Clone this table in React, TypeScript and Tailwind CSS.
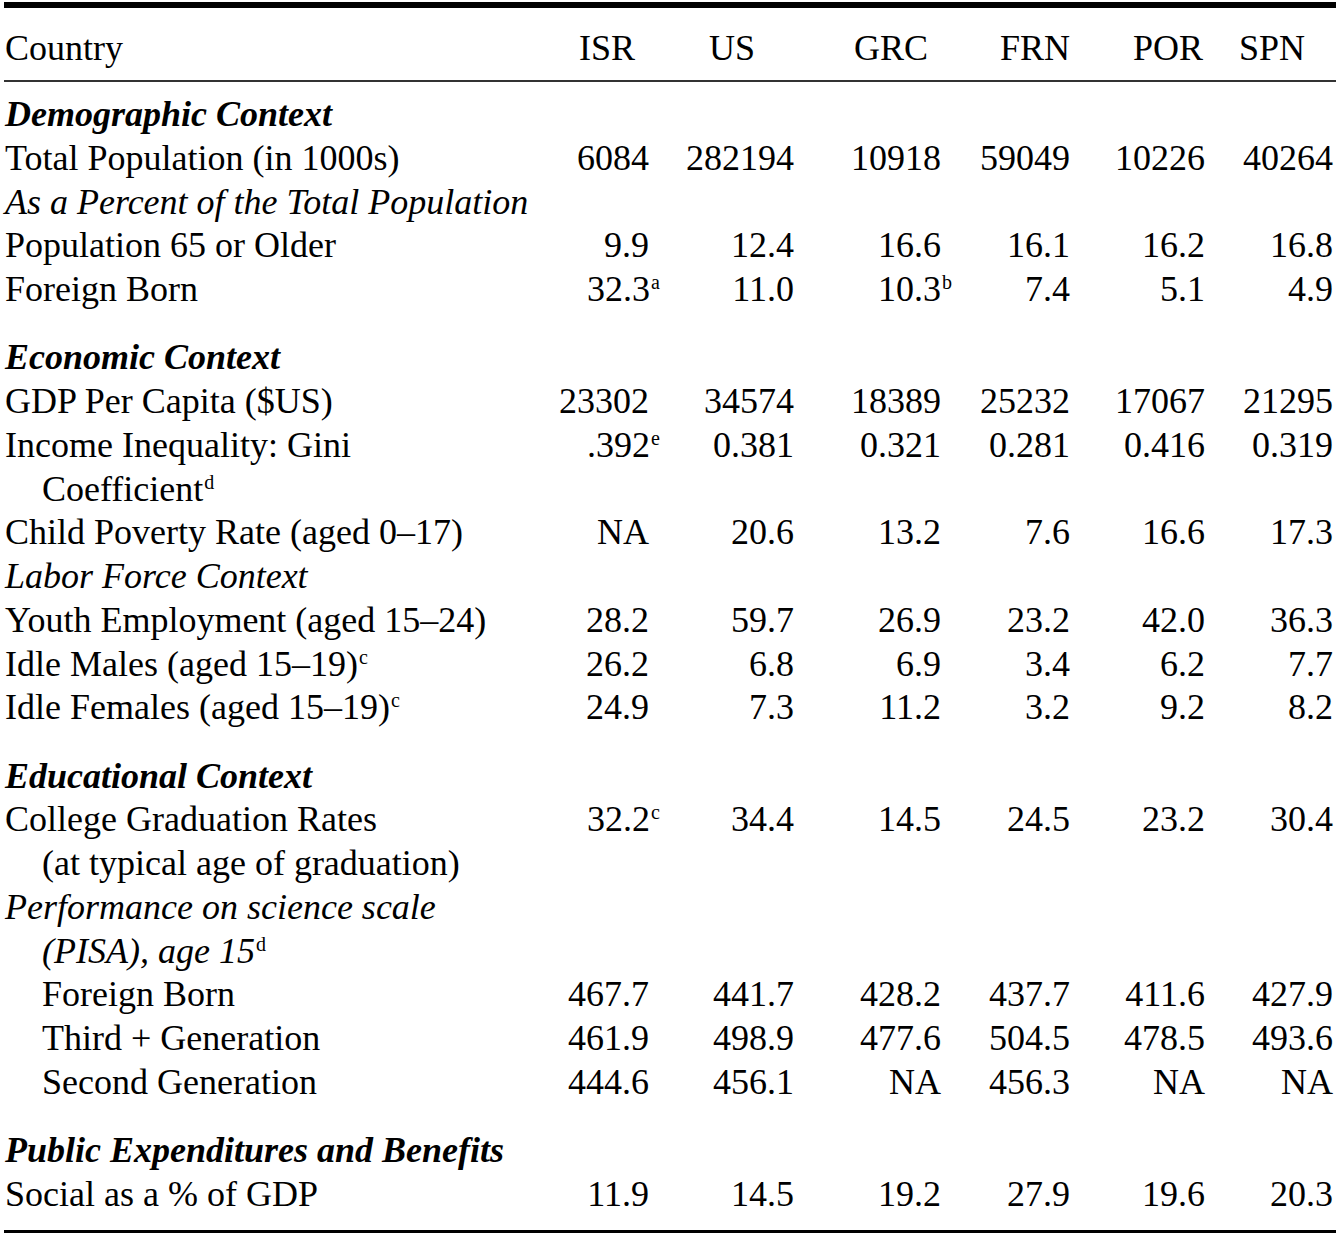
import React from "react";

type Val = string | [string, string];
type Row = {
  label: React.ReactNode;
  kind: "section" | "sub" | "data";
  indent?: boolean;
  values?: Val[];
  gap?: boolean;
};

const Sup = ({ c }: { c: string }) => (
  <span className="relative top-[-12px] ml-[1px] align-baseline text-[20px] not-italic leading-none">{c}</span>
);

const HangSup = ({ c }: { c: string }) => (
  <span className="relative top-[-12px] ml-[1px] mr-[-11px] align-baseline text-[20px] leading-none">{c}</span>
);

const rows: Row[] = [
  { label: "Demographic Context", kind: "section" },
  { label: "Total Population (in 1000s)", kind: "data", values: ["6084", "282194", "10918", "59049", "10226", "40264"] },
  { label: "As a Percent of the Total Population", kind: "sub" },
  { label: "Population 65 or Older", kind: "data", values: ["9.9", "12.4", "16.6", "16.1", "16.2", "16.8"] },
  { label: "Foreign Born", kind: "data", values: [["32.3", "a"], "11.0", ["10.3", "b"], "7.4", "5.1", "4.9"] },
  { label: "Economic Context", kind: "section", gap: true },
  { label: "GDP Per Capita ($US)", kind: "data", values: ["23302", "34574", "18389", "25232", "17067", "21295"] },
  { label: "Income Inequality: Gini", kind: "data", values: [[".392", "e"], "0.381", "0.321", "0.281", "0.416", "0.319"] },
  { label: <>Coefficient<Sup c="d" /></>, kind: "data", indent: true },
  { label: "Child Poverty Rate (aged 0–17)", kind: "data", values: ["NA", "20.6", "13.2", "7.6", "16.6", "17.3"] },
  { label: "Labor Force Context", kind: "sub" },
  { label: "Youth Employment (aged 15–24)", kind: "data", values: ["28.2", "59.7", "26.9", "23.2", "42.0", "36.3"] },
  { label: <>Idle Males (aged 15–19)<Sup c="c" /></>, kind: "data", values: ["26.2", "6.8", "6.9", "3.4", "6.2", "7.7"] },
  { label: <>Idle Females (aged 15–19)<Sup c="c" /></>, kind: "data", values: ["24.9", "7.3", "11.2", "3.2", "9.2", "8.2"] },
  { label: "Educational Context", kind: "section", gap: true },
  { label: "College Graduation Rates", kind: "data", values: [["32.2", "c"], "34.4", "14.5", "24.5", "23.2", "30.4"] },
  { label: "(at typical age of graduation)", kind: "data", indent: true },
  { label: "Performance on science scale", kind: "sub" },
  { label: <>(PISA), age 15<Sup c="d" /></>, kind: "sub", indent: true },
  { label: "Foreign Born", kind: "data", indent: true, values: ["467.7", "441.7", "428.2", "437.7", "411.6", "427.9"] },
  { label: "Third + Generation", kind: "data", indent: true, values: ["461.9", "498.9", "477.6", "504.5", "478.5", "493.6"] },
  { label: "Second Generation", kind: "data", indent: true, values: ["444.6", "456.1", "NA", "456.3", "NA", "NA"] },
  { label: "Public Expenditures and Benefits", kind: "section", gap: true },
  { label: "Social as a % of GDP", kind: "data", values: ["11.9", "14.5", "19.2", "27.9", "19.6", "20.3"] },
];

const headers = [
  { t: "ISR", cls: "pr-[14px]" },
  { t: "US", cls: "pr-[39px]" },
  { t: "GRC", cls: "pr-[13px]" },
  { t: "FRN", cls: "pr-[0px]" },
  { t: "POR", cls: "pr-[2px]" },
  { t: "SPN", cls: "pr-[28px]" },
];

const gridCls = "grid grid-cols-[525px_120px_145px_147px_129px_135px_128px]";

export default function App() {
  return (
    <div
      className="min-h-[1240px] w-[1341px] bg-white text-black"
      style={{ fontFamily: '"Liberation Serif", "Times New Roman", serif' }}
    >
      <div className="pl-[4px] pr-[5px] pt-[2px]">
        <div className="border-t-[6px] border-black">
          <div className={`${gridCls} pr-[3px] pt-[18px] pb-[10px] text-[36px] leading-[44px]`}>
            <div className="pl-[1px]">Country</div>
            {headers.map((h) => (
              <div key={h.t} className={`text-right ${h.cls}`}>
                {h.t}
              </div>
            ))}
          </div>
          <div className="border-t-2 border-[#333] pt-[11px] pb-[13px]">
            {rows.map((r, i) => (
              <div
                key={i}
                className={`${gridCls} pr-[3px] text-[36px] leading-[43.75px] ${r.gap ? "mt-[24.5px]" : ""}`}
              >
                <div
                  className={`whitespace-nowrap ${r.indent ? "pl-[38px]" : "pl-[1px]"} ${
                    r.kind === "section" ? "italic font-bold" : r.kind === "sub" ? "italic" : ""
                  }`}
                >
                  {r.label}
                </div>
                {(r.values ?? ["", "", "", "", "", ""]).map((v, j) => (
                  <div key={j} className="text-right whitespace-nowrap">
                    {Array.isArray(v) ? (
                      <>
                        {v[0]}
                        <HangSup c={v[1]} />
                      </>
                    ) : (
                      v
                    )}
                  </div>
                ))}
              </div>
            ))}
          </div>
          <div className="border-t-[3px] border-black" />
        </div>
      </div>
    </div>
  );
}
